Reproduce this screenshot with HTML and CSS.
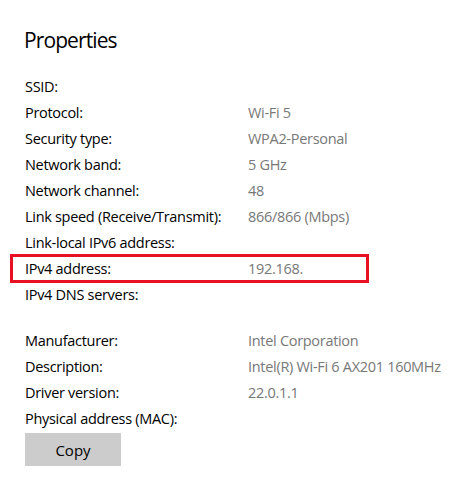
FILE: index.html
```html
<!DOCTYPE html>
<html lang="en">

<head>
    <meta charset="UTF-8">
    <meta name="viewport" content="width=device-width, initial-scale=1.0">
    <title>Properties</title>
    <link rel="stylesheet" href="styles.css">
</head>

<body>
    <div id="panel">
        <h2 class="title">Properties</h2>
        <div class="props">
            <div class="row"><span class="label">SSID:</span><span class="value"></span></div>
            <div class="row"><span class="label">Protocol:</span><span class="value">Wi-Fi 5</span></div>
            <div class="row"><span class="label">Security type:</span><span class="value">WPA2-Personal</span></div>
            <div class="row"><span class="label">Network band:</span><span class="value">5 GHz</span></div>
            <div class="row"><span class="label">Network channel:</span><span class="value">48</span></div>
            <div class="row"><span class="label">Link speed (Receive/Transmit):</span><span class="value">866/866 (Mbps)</span></div>
            <div class="row"><span class="label">Link-local IPv6 address:</span><span class="value"></span></div>
            <div class="row marked"><span class="label">IPv4 address:</span><span class="value">192.168.</span></div>
            <div class="row"><span class="label">IPv4 DNS servers:</span><span class="value"></span></div>
        </div>
        <div class="props gap">
            <div class="row"><span class="label">Manufacturer:</span><span class="value">Intel Corporation</span></div>
            <div class="row"><span class="label">Description:</span><span class="value">Intel(R) Wi-Fi 6 AX201 160MHz</span></div>
            <div class="row"><span class="label">Driver version:</span><span class="value">22.0.1.1</span></div>
            <div class="row"><span class="label">Physical address (MAC):</span><span class="value"></span></div>
        </div>
        <button class="copy">Copy</button>
    </div>
</body>

</html>
```

FILE: styles.css
```css
*,
*::before,
*::after {
    margin: 0;
    padding: 0;
    box-sizing: border-box;
}

body,
html {
    height: 100%;
    width: 100%;
    background: #fff;
    font-family: "Open Sans", "Noto Sans", sans-serif;
    color: #000;
}

#panel {
    padding: 25px 0 0 25px;
    display: flex;
    flex-direction: column;
    align-items: flex-start;
}

.title {
    font-size: 21px;
    font-weight: 400;
    line-height: 30px;
    margin-left: -1px;
    margin-bottom: 18px;
    letter-spacing: -0.9px;
}

.props {
    width: 100%;
    display: flex;
    flex-direction: column;
}

.props.gap {
    margin-top: 20px;
}

.row {
    display: grid;
    grid-template-columns: 223px auto;
    height: 26px;
    align-items: center;
    font-size: 14.5px;
    letter-spacing: -0.3px;
}

.value {
    color: #787878;
}

.marked {
    position: relative;
}

.marked::before {
    content: "";
    position: absolute;
    left: -15px;
    top: -1px;
    width: 359px;
    height: 29px;
    border: 3px solid #e81123;
}

.copy {
    margin-top: 2px;
    width: 96px;
    height: 33px;
    background: #cccccc;
    border: none;
    font-family: "Open Sans", "Noto Sans", sans-serif;
    font-size: 15px;
    color: #000;
}
```
